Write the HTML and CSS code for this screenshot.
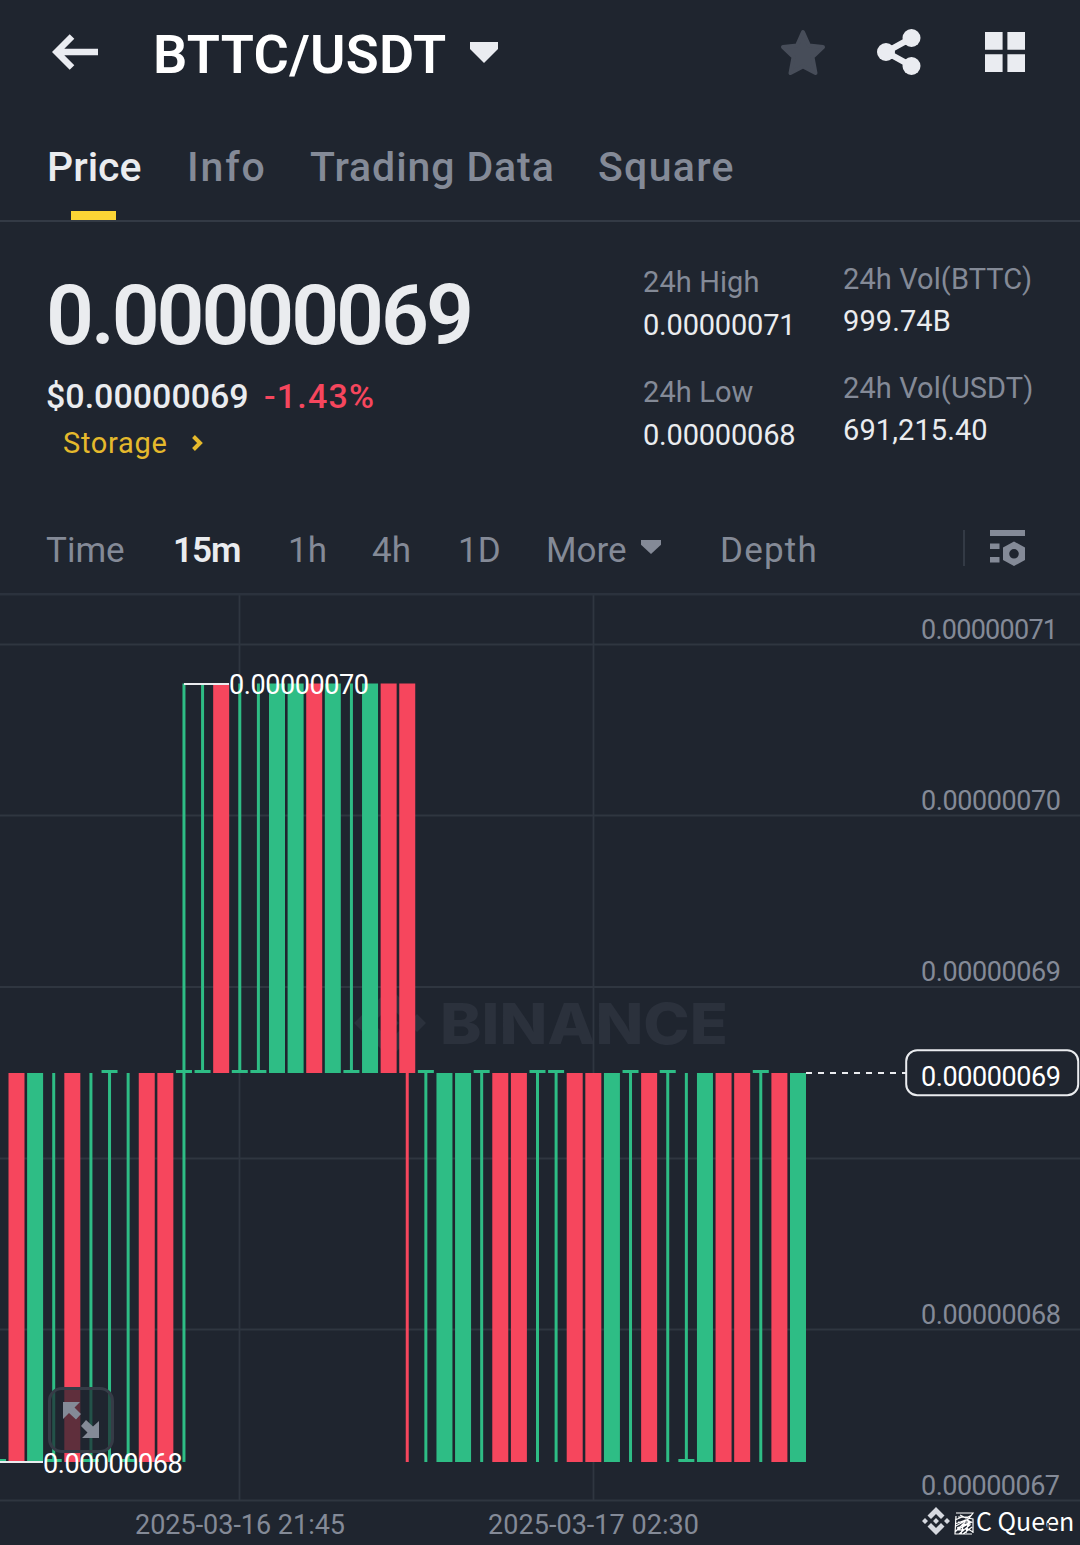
FILE: index.html
```
<!DOCTYPE html>
<html lang="en">
<head>
    <meta charset="UTF-8">
    <title>BTTC/USDT</title>
    <link rel="stylesheet" href="styles.css">
</head>
<body>
    <div class="header-bar">
        <svg class="back" width="46" height="36" viewBox="0 0 46 36">
            <path d="M20 2.500L4.500 18L20 33.500M5 18H46" />
        </svg>
        <h1 class="pair">BTTC/USDT</h1>
        <svg class="pair-caret" width="28" height="21" viewBox="0 0 28 21">
            <path d="M0 0H28V7L14 21L0 7Z" />
        </svg>
        <div class="header-icons">
            <svg class="star" width="46" height="48" viewBox="0 0 46 48">
                <path d="M23 4L29 17.500L43 19L32.500 29L35.500 45L23 38.500L10.500 45L13.500 29L3 19L17 17.500Z" />
            </svg>
            <svg class="share" width="44" height="46" viewBox="0 0 44 46">
                <path d="M34.500 9L9 23L34.500 37" />
                <circle cx="34.500" cy="9" r="9" />
                <circle cx="9" cy="23" r="9" />
                <circle cx="34.500" cy="37" r="9" />
            </svg>
            <svg class="apps" width="40" height="40" viewBox="0 0 40 40">
                <path d="M0 0H17.600V17.700H0ZM22.400 0H40V17.700H22.400ZM0 22.300H17.600V40H0ZM22.400 22.300H40V40H22.400Z" />
            </svg>
        </div>
    </div>

    <div class="tabs">
        <a class="tab tab-price active">Price</a>
        <a class="tab tab-info">Info</a>
        <a class="tab tab-data">Trading Data</a>
        <a class="tab tab-square">Square</a>
    </div>

    <div class="summary">
        <div class="price-box">
            <div class="price">0.00000069</div>
            <div class="price-row">
                <span class="fiat">$0.00000069</span>
                <span class="change">-1.43%</span>
            </div>
            <div class="tag">
                <span>Storage</span>
                <svg width="12" height="18" viewBox="0 0 12 18"><path d="M2.500 2.500L9 9L2.500 15.500" /></svg>
            </div>
        </div>
        <div class="stats">
            <div class="label">24h High</div>
            <div class="value">0.00000071</div>
            <div class="label second">24h Low</div>
            <div class="value">0.00000068</div>
        </div>
        <div class="stats volume">
            <div class="label">24h Vol(BTTC)</div>
            <div class="value">999.74B</div>
            <div class="label second">24h Vol(USDT)</div>
            <div class="value">691,215.40</div>
        </div>
    </div>

    <div class="intervals">
        <span class="int-time">Time</span>
        <span class="int-15m active">15m</span>
        <span class="int-1h">1h</span>
        <span class="int-4h">4h</span>
        <span class="int-1d">1D</span>
        <span class="int-more">More</span>
        <svg class="more-caret" width="20" height="14" viewBox="0 0 28 21" preserveAspectRatio="none">
            <path d="M0 0H28V7L14 21L0 7Z" />
        </svg>
        <span class="int-depth">Depth</span>
        <div class="divider"></div>
        <svg class="settings" width="37" height="38" viewBox="0 0 37 38">
            <path d="M1 1H36V7H1ZM1 14.500H10.500V20H1ZM1 28H10.500V33.500H1Z" />
            <path fill-rule="evenodd" d="M25 12.500L36 18.500V31L25 37L14 31V18.500ZM25 20A4.800 4.800 0 1 0 25 29.600A4.800 4.800 0 1 0 25 20Z" />
        </svg>
    </div>

    <div class="chart-container">
        <svg id="chart" width="1080" height="952" viewBox="0 593 1080 952">
            <g class="watermark">
                <path d="M354 1023L363 1014L372 1023L363 1032ZM408 1023L417 1014L426 1023L417 1032ZM381 1023L390 1014L399 1023L390 1032ZM369 1009L390 988L411 1009L402 1018L390 1006L378 1018ZM369 1037L390 1058L411 1037L402 1028L390 1040L378 1028Z" />
                <text x="440" y="1044" textLength="288" lengthAdjust="spacingAndGlyphs">BINANCE</text>
            </g>
            <g class="grid-lines">
                <path d="M0 644.500H1080M0 815.500H1080M0 987H1080M0 1158.500H1080M0 1329.500H1080M0 1500.500H1080" />
                <path d="M239.500 593V1500M593.500 593V1500" />
                <path class="top-line" d="M0 594H1080" />
            </g>
            <g id="candles"></g>
            <g class="axis">
                <text x="921" y="639" textLength="137">0.00000071</text>
                <text x="921" y="810" textLength="140">0.00000070</text>
                <text x="921" y="981" textLength="140">0.00000069</text>
                <text x="921" y="1324" textLength="140">0.00000068</text>
                <text x="921" y="1495" textLength="139">0.00000067</text>
                <text x="135" y="1534" textLength="210">2025-03-16 21:45</text>
                <text x="488" y="1534" textLength="211">2025-03-17 02:30</text>
            </g>
            <g class="marks">
                <path d="M184 684H229M0 1462H43" />
                <path class="dashed" d="M806 1073H906" />
                <rect x="906.200" y="1050.200" width="172" height="45" rx="11" />
                <text x="921" y="1086" textLength="140">0.00000069</text>
                <text x="229" y="694" textLength="140">0.00000070</text>
            </g>
        </svg>

        <button class="expand">
            <svg width="38" height="38" viewBox="0 0 38 38">
                <path d="M1 1H18L12.500 6.500L19 13L14 18.500L7 12L1 18ZM24 19L31 25.500L37 20V37H20L25.500 31.500L19 25Z" />
            </svg>
        </button>
        <div class="low-mark">0.00000068</div>

        <div class="author">
            <svg width="28" height="28" viewBox="0 0 28 28">
                <path d="M14 0L22.500 8.500L19 12L14 7L9 12L5.500 8.500ZM14 28L22.500 19.500L19 16L14 21L9 16L5.500 19.500ZM14 11L17 14L14 17L11 14ZM3 11L6 14L3 17L0 14ZM25 11L28 14L25 17L22 14Z" />
            </svg>
            <svg class="seal" width="21" height="23" viewBox="0 0 21 23">
                <path d="M2 1H19L16 5H4M1 8L8 5L19 7V21M1 12L12 8L17 10L3 16M1 20L9 12L16 13L5 22M9 22L18 15M2 4L1 22H18M6 3L12 6L18 3M4 10H18M4 18L14 17L19 20M11 8L7 22M15 8L12 21M2 14L16 6M3 18L18 10" />
            </svg>
            <span class="author-name">C Queen</span>
            <svg class="nick" width="9" height="16" viewBox="0 0 9 16">
                <path d="M1 3V7M6 1L3 6M4 9V15" />
            </svg>
        </div>
    </div>

    <script>
        // r / g = full body, t = doji on top, b = doji at the bottom
        // capital letters belong to the upper range
        const series = "rgbrbtbrrXBRBBGGRGBGRYtggtrrttrrgtrtbgrrtrg";
        const high = 683.5, mid = 1073, low = 1462;
        const step = 18.607, bodyWidth = 16;
        const green = "#2ebd85", red = "#f6465d";
        const candles = document.getElementById("candles");

        function addRect(x, y, width, height, color) {
            const rect = document.createElementNS("http://www.w3.org/2000/svg", "rect");
            rect.setAttribute("x", x);
            rect.setAttribute("y", y);
            rect.setAttribute("width", width);
            rect.setAttribute("height", height);
            rect.setAttribute("fill", color);
            candles.appendChild(rect);
        }

        addRect(0, low - 3, 6, 3, green);

        series.split("").forEach((type, i) => {
            const x = 16.5 + i * step;
            const upper = type === type.toUpperCase();
            const top = upper ? high : mid;
            const bottom = upper ? mid : low;
            const kind = type.toLowerCase();

            if (kind === "r" || kind === "g" || kind === "y") {
                addRect(x - bodyWidth / 2, top, bodyWidth, bottom - top, kind === "g" ? green : red);
                if (kind === "y") {
                    addRect(x - 1.5, mid, 3, low - mid, red);
                }
                return;
            }
            const end = kind === "x" ? low : bottom;
            const start = kind === "t" ? top - 3 : top;
            addRect(x - 1.5, start, 3, end - start, green);
            addRect(x - bodyWidth / 2, kind === "t" ? top - 3 : bottom - 3, bodyWidth, 3, green);
        });
    </script>
</body>
</html>
```
FILE: styles.css
```
body {
    font-family: Roboto, "Liberation Sans", sans-serif;
    margin: 0;
    padding: 0;
    background-color: #1f252f;
    color: #eaecef;
    width: 1080px;
    height: 1545px;
    overflow: hidden;
}

svg {
    display: block;
    flex-shrink: 0;
}

/* Header */
.header-bar {
    display: flex;
    align-items: center;
    height: 104px;
    padding-left: 52px;
    padding-right: 55px;
    fill: #eaecf1;
}

.back {
    fill: none;
    stroke: #eaecf1;
    stroke-width: 6.5;
}

.pair {
    font-size: 54px;
    font-weight: 600;
    line-height: 64px;
    letter-spacing: 0.3px;
    margin: 5px 0 0 55px;
    width: 315px;
    color: #ffffff;
    white-space: nowrap;
}

.pair-caret {
    margin-left: 2px;
}

.header-icons {
    display: flex;
    align-items: center;
    margin-left: auto;
}

.star {
    fill: #474d59;
    stroke: #474d59;
    stroke-width: 4;
    stroke-linejoin: round;
    margin-right: 51px;
}

.share {
    margin-right: 64px;
}

.share path {
    fill: none;
    stroke: #eaecf1;
    stroke-width: 6;
}

/* Tabs */
.tabs {
    display: flex;
    height: 116px;
    padding-left: 47px;
    border-bottom: 2px solid #333a45;
}

.tab {
    font-size: 41px;
    font-weight: 500;
    line-height: 126px;
    letter-spacing: 0.9px;
    color: #848a97;
    white-space: nowrap;
}

.tab.active {
    color: #eaecef;
    letter-spacing: 0;
    position: relative;
}

.tab.active::after {
    content: "";
    position: absolute;
    left: 24px;
    bottom: 0;
    width: 45px;
    height: 9px;
    background-color: #fcd535;
}

.tab-price {
    width: 140px;
}

.tab-info {
    width: 123px;
    letter-spacing: 1.9px;
}

.tab-data {
    width: 288px;
}

.tab-square {
    letter-spacing: 1.3px;
}

/* Price and 24h figures */
.summary {
    display: flex;
    height: 283px;
}

.price-box {
    width: 597px;
    padding-left: 47px;
}

.price {
    font-size: 84px;
    font-weight: 600;
    line-height: 90px;
    letter-spacing: -3.1px;
    margin-top: 49px;
    margin-left: -1px;
}

.price-row {
    display: flex;
    font-size: 34px;
    font-weight: 500;
    line-height: 40px;
    margin-top: 15px;
    margin-left: -1px;
}

.fiat {
    width: 218px;
}

.change {
    color: #f6465d;
    letter-spacing: 1.2px;
}

.tag {
    display: flex;
    align-items: center;
    font-size: 29px;
    line-height: 34px;
    margin-top: 10px;
    padding-left: 16px;
    letter-spacing: 0.7px;
    color: #e5b92c;
}

.tag span {
    width: 128px;
}

.tag svg {
    fill: none;
    stroke: #e5b92c;
    stroke-width: 4;
}

.stats {
    width: 200px;
    margin-top: 43px;
    margin-left: -1px;
    font-size: 29px;
    line-height: 34px;
    white-space: nowrap;
}

.stats.volume {
    margin-top: 40px;
    margin-left: 0;
}

.label {
    color: #848a97;
    letter-spacing: 0.1px;
}

.value {
    margin-top: 9px;
    letter-spacing: -0.2px;
}

.volume .value {
    margin-top: 8px;
    letter-spacing: 0.1px;
}

.label.second {
    margin-top: 33px;
}

/* Chart intervals */
.intervals {
    display: flex;
    align-items: center;
    height: 88px;
    padding-left: 46px;
    font-size: 35px;
    color: #848a97;
    fill: #848a97;
}

.intervals span {
    line-height: 84px;
    padding-top: 4px;
}

.intervals .active {
    color: #eaecef;
    font-weight: 600;
    letter-spacing: -1px;
}

.int-time { width: 127px; }
.int-15m { width: 115px; }
.int-1h { width: 84px; }
.int-4h { width: 86px; }
.int-1d { width: 88px; }
.int-more { width: 95px; }

.int-depth {
    width: 243px;
    letter-spacing: 1.2px;
}

.more-caret {
    margin-right: 59px;
    margin-bottom: 4px;
}

.divider {
    width: 2px;
    height: 36px;
    margin-bottom: 3px;
    background-color: #333a45;
}

.settings {
    margin-left: 24px;
    margin-bottom: 2px;
}

/* Chart */
.chart-container {
    position: relative;
    height: 952px;
}

.grid-lines {
    fill: none;
    stroke: #2f3640;
    stroke-width: 1.8;
}

.top-line {
    stroke-width: 3;
    stroke: #2b323d;
}

.watermark {
    fill: #2b313c;
    font-family: Inter, sans-serif;
    font-size: 57px;
    font-weight: 800;
}

.axis {
    fill: #848a97;
    font-size: 27px;
}

.marks {
    fill: #ffffff;
    font-size: 27px;
}

.marks path,
.marks rect {
    fill: none;
    stroke: #eaecef;
    stroke-width: 2;
}

.marks .dashed {
    stroke-dasharray: 6 6;
}

.expand {
    position: absolute;
    left: 48px;
    top: 794px;
    width: 66px;
    height: 66px;
    padding: 0;
    border: 3px solid #363c47;
    border-radius: 14px;
    background-color: rgba(31, 37, 47, 0.7);
    display: flex;
    align-items: center;
    justify-content: center;
}

.expand svg {
    fill: #848a97;
}

.low-mark {
    position: absolute;
    left: 43px;
    top: 855px;
    font-size: 27px;
    line-height: 32px;
    letter-spacing: -0.45px;
    color: #ffffff;
}

.author {
    position: absolute;
    left: 922px;
    top: 910px;
    display: flex;
    align-items: center;
    height: 36px;
    fill: #d5d8df;
    color: #ffffff;
}

.author-name {
    font-family: "Noto Sans CJK SC", sans-serif;
    font-size: 25px;
    font-weight: 400;
    line-height: 34px;
    padding-bottom: 2px;
    white-space: nowrap;
}

.seal {
    fill: none;
    stroke: #ffffff;
    stroke-width: 1.2;
    margin: 5px 1px 0 4px;
}

.nick {
    position: absolute;
    left: 122px;
    top: 11px;
    fill: none;
    stroke: #1f252f;
    stroke-width: 1.5;
}
```
